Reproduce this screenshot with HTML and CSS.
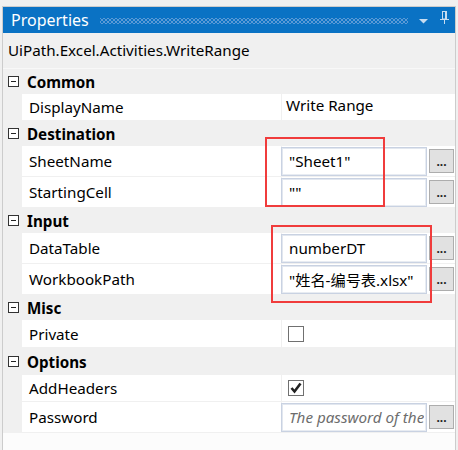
FILE: index.html
```html
<!DOCTYPE html>
<html>
<head>
<meta charset="utf-8">
<link rel="stylesheet" href="styles.css">
</head>
<body>
<div class="panel">
  <div class="titlebar">
    <span class="title">Properties</span>
    <div class="grip"></div>
    <svg class="drop" width="9" height="5" viewBox="0 0 9 5"><polygon points="0,0 9,0 4.5,4.5" fill="#c7dcf0"/></svg>
    <svg class="pin" width="9" height="13" viewBox="0 0 9 13">
      <rect x="2.5" y="0.5" width="4" height="7.5" fill="none" stroke="#c7dcf0" stroke-width="1"/>
      <rect x="5" y="1" width="1" height="7" fill="#c7dcf0"/>
      <rect x="0" y="8" width="9" height="1" fill="#c7dcf0"/>
      <rect x="4" y="9" width="1" height="4" fill="#c7dcf0"/>
    </svg>
  </div>
  <div class="subtitle">UiPath.Excel.Activities.WriteRange</div>
  <div class="grid">
    <div class="cat"><span class="toggle"></span>Common</div>
    <div class="row"><div class="name">DisplayName</div><div class="val plain">Write Range</div></div>

    <div class="cat"><span class="toggle"></span>Destination</div>
    <div class="row tall"><div class="name">SheetName</div><div class="val"><div class="box">"Sheet1"</div><div class="btn">...</div></div></div>
    <div class="row tall"><div class="name">StartingCell</div><div class="val"><div class="box">""</div><div class="btn">...</div></div></div>

    <div class="cat"><span class="toggle"></span>Input</div>
    <div class="row tall"><div class="name">DataTable</div><div class="val"><div class="box">numberDT</div><div class="btn">...</div></div></div>
    <div class="row tall"><div class="name">WorkbookPath</div><div class="val"><div class="box">"姓名-编号表.xlsx"</div><div class="btn">...</div></div></div>

    <div class="cat"><span class="toggle"></span>Misc</div>
    <div class="row mid"><div class="name">Private</div><div class="val"><span class="check"></span></div></div>

    <div class="cat wide"><span class="toggle"></span>Options</div>
    <div class="row"><div class="name">AddHeaders</div><div class="val"><span class="check"><svg width="14" height="14" viewBox="0 0 14 14"><polyline points="2.5,7 5.5,10.5 11.5,2.5" fill="none" stroke="#222" stroke-width="2.6"/></svg></span></div></div>
    <div class="row tall"><div class="name">Password</div><div class="val"><div class="box placeholder"><span class="clip">The password of the workbook</span></div><div class="btn">...</div></div></div>
  </div>
  <div class="filler"></div>
  <div class="redbox r1"></div>
  <div class="redbox r2"></div>
</div>
</body>
</html>
```

FILE: styles.css
```css
html, body {
  margin: 0;
  padding: 0;
  height: 100%;
  background: #f0f0f0;
  font-family: "Noto Sans", "Noto Sans CJK SC", sans-serif;
  font-size: 15.2px;
  color: #000;
  overflow: hidden;
}

.panel {
  position: relative;
  margin: 6px 2px 0 2px;
  height: 444px;
  border: 1px solid #cccccc;
  border-bottom: none;
  background: #f0f0f0;
  display: flex;
  flex-direction: column;
  box-sizing: border-box;
}

.titlebar {
  height: 26px;
  flex: none;
  background: #0a72c4;
  display: flex;
  align-items: center;
  padding: 0 6px 0 8px;
}

.title {
  color: #fff;
  font-size: 16px;
  line-height: 26px;
}

.grip {
  flex: 1;
  height: 6px;
  margin: 1px 11px 0 11px;
  background-image:
    radial-gradient(circle, #5c9ad6 0.9px, transparent 1px),
    radial-gradient(circle, #5c9ad6 0.9px, transparent 1px);
  background-size: 4px 4px, 4px 4px;
  background-position: 0 0, 2px 2px;
}

.drop {
  display: block;
  margin-top: 3px;
  margin-right: 12px;
}

.pin {
  display: block;
  margin-top: -6px;
}

.subtitle {
  height: 35px;
  flex: none;
  line-height: 34px;
  padding-left: 5px;
  border-bottom: 1px solid #f8f8f8;
}

.grid {
  flex: none;
  display: flex;
  flex-direction: column;
}

.cat {
  height: 25px;
  display: flex;
  align-items: center;
  font-weight: bold;
  padding-left: 5px;
}

.cat.wide {
  height: 27px;
}

.toggle {
  width: 9px;
  height: 9px;
  border: 1px solid #333;
  background: #fff;
  margin-right: 8px;
  position: relative;
  flex: none;
}

.toggle::after {
  content: "";
  position: absolute;
  left: 2px;
  top: 4px;
  width: 5px;
  height: 1px;
  background: #222;
}

.row {
  margin-left: 19px;
  height: 26px;
  display: grid;
  grid-template-columns: 259px 173px;
  column-gap: 1px;
  margin-bottom: 1px;
}

.row.tall {
  height: 30px;
}

.row.mid {
  height: 27px;
}

.name {
  background: #fff;
  padding-left: 7px;
  display: flex;
  align-items: center;
}

.val {
  background: #fff;
  display: flex;
  align-items: center;
}

.val.plain {
  padding-left: 4px;
  padding-bottom: 4px;
}

.box {
  width: 146px;
  height: 29px;
  box-sizing: border-box;
  border: 1px solid #c9d2e2;
  box-shadow: inset 1px 1px 0 #e2e7ef, inset -1px -1px 0 #e8ecf2;
  padding-left: 7px;
  display: flex;
  align-items: center;
  white-space: nowrap;
  overflow: hidden;
  margin-left: -1px;
}

.clip {
  display: block;
  width: 135px;
  overflow: hidden;
  white-space: nowrap;
}

.placeholder {
  font-style: italic;
  color: #6d6d6d;
}

.btn {
  width: 25px;
  height: 24px;
  box-sizing: border-box;
  margin-left: 2px;
  background: #e1e1e1;
  border: 1px solid #adadad;
  font-size: 12px;
  line-height: 24px;
  text-align: center;
  font-weight: bold;
  color: #222;
}

.check {
  width: 16px;
  height: 16px;
  box-sizing: border-box;
  border: 1px solid #707070;
  background: #fff;
  margin-left: 6px;
  display: flex;
  align-items: center;
  justify-content: center;
}

.check svg {
  display: block;
}

.filler {
  flex: 1;
  background: #fcfcfc;
}

.redbox {
  position: absolute;
  border: 2px solid #f03c3c;
  box-sizing: border-box;
}

.r1 {
  left: 262px;
  top: 130px;
  width: 120px;
  height: 70px;
}

.r2 {
  left: 268px;
  top: 218px;
  width: 161px;
  height: 78px;
}
```
